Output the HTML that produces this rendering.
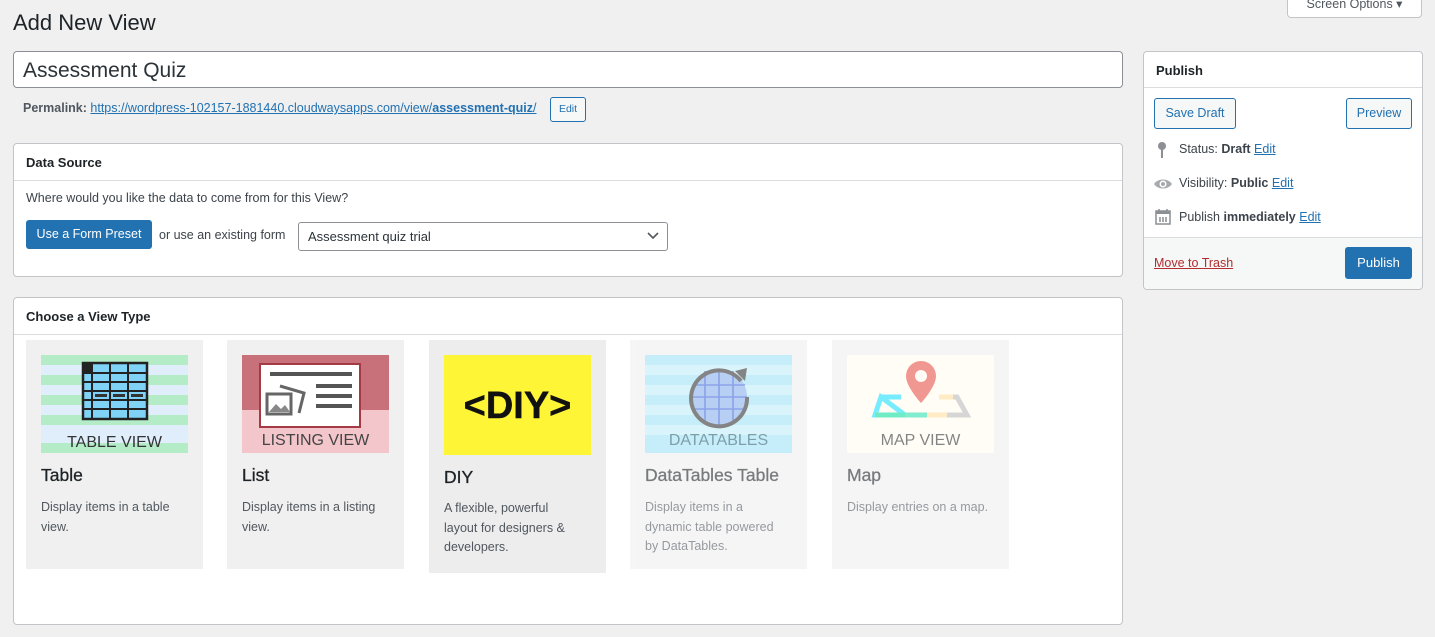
<!DOCTYPE html>
<html><head><meta charset="utf-8"><style>
*{box-sizing:border-box}
body{margin:0;width:1435px;height:637px;background:#f0f0f1;font-family:"Liberation Sans",sans-serif;color:#1d2327;font-size:13px;position:relative;overflow:hidden}
.abs{position:absolute}
h1{position:absolute;left:13px;top:10px;margin:0;font-size:22px;font-weight:400;color:#1d2327}
.so{left:1287px;top:-6px;width:135px;height:24px;background:#fff;border:1px solid #c3c4c7;border-top:none;border-radius:0 0 4px 4px;font-size:12.5px;color:#50575e;text-align:center;line-height:20px}
.title{left:13px;top:51px;width:1110px;height:37px;background:#fff;border:1px solid #8c8f94;border-radius:4px;font-size:21px;padding:7px 9px;color:#2c3338}
.perm{left:23px;top:101px;font-size:12.5px;color:#50575e}
.perm b{font-weight:700}
.perm a{color:#2271b1;text-decoration:underline}
.ebtn{left:550px;top:97px;width:36px;height:25px;border:1px solid #2271b1;border-radius:3px;background:#f6f7f7;color:#2271b1;font-size:10.5px;text-align:center;line-height:23px}
.box{background:#fff;border:1px solid #c3c4c7;border-radius:4px}
.hd{height:37px;border-bottom:1px solid #dcdcde;font-size:13px;font-weight:700;padding:11px 12px;color:#1d2327}
.blue{background:#2271b1;color:#fff;border-radius:3px;text-align:center}
.card{position:absolute;top:340px;width:177px;height:229px;background:#f0f0f0}
.card svg{position:absolute;left:15px;top:15px}
.card .t{position:absolute;left:15px;top:125px;font-size:17.5px;color:#1d2327;-webkit-text-stroke:0.3px #1d2327}
.card .d{position:absolute;left:15px;top:158px;width:160px;white-space:nowrap;font-size:12.5px;line-height:19.5px;color:#50575e}
.fade{opacity:.6}
.pbtn{border:1px solid #2271b1;border-radius:3px;background:#f6f7f7;color:#2271b1;font-size:12.5px;text-align:center;line-height:28px}
.row{left:1155px;font-size:12.5px;color:#3c434a}
.row a{color:#2271b1;text-decoration:underline}
</style></head><body>
<h1>Add New View</h1>
<div class="abs so">Screen Options ▾</div>
<div class="abs title">Assessment Quiz</div>
<div class="abs perm"><b>Permalink:</b> <a>https://wordpress-102157-1881440.cloudwaysapps.com/view/<b>assessment-quiz</b>/</a></div>
<div class="abs ebtn">Edit</div>

<div class="abs box" style="left:13px;top:143px;width:1110px;height:134px">
<div class="hd">Data Source</div>
<div class="abs" style="left:12px;top:47px;font-size:12.5px;color:#3c434a">Where would you like the data to come from for this View?</div>
<div class="abs blue" style="left:12px;top:76px;width:126px;height:29px;line-height:29px;font-size:12.5px">Use a Form Preset</div>
<div class="abs" style="left:145px;top:84px;font-size:12.5px;color:#3c434a">or use an existing form</div>
<div class="abs" style="left:284px;top:78px;width:370px;height:29px;border:1px solid #8c8f94;border-radius:3px;font-size:13px;padding:6px 9px;color:#2c3338">Assessment quiz trial
<svg class="abs" style="right:8px;top:9px" width="12" height="8" viewBox="0 0 12 8"><path d="M1 1l5 5 5-5" stroke="#50575e" stroke-width="1.6" fill="none"/></svg></div>
</div>

<div class="abs box" style="left:13px;top:297px;width:1110px;height:328px">
<div class="hd">Choose a View Type</div>
</div>

<div class="card" style="left:26px">
<svg width="147" height="98" viewBox="0 0 147 98">
<rect width="147" height="98" fill="#e0edfb"/>
<g fill="#b4ecc8"><rect y="0" width="147" height="10"/><rect y="20" width="147" height="10"/><rect y="40" width="147" height="10"/><rect y="60" width="147" height="10"/><rect y="88" width="147" height="10"/></g>
<rect x="42" y="8" width="64" height="56" fill="#7fd3f7" stroke="#222" stroke-width="2.5"/>
<rect x="42" y="8" width="9" height="9" fill="#222"/>
<g stroke="#222" stroke-width="2"><path d="M51 8v56M69 8v56M87 8v56M42 18h64M42 27h64M42 36h64M42 45h64M42 54h64"/></g>
<g fill="#333"><rect x="54" y="39" width="12" height="3"/><rect x="72" y="39" width="12" height="3"/><rect x="90" y="39" width="12" height="3"/></g>
<text x="73.5" y="92" font-size="16" fill="#333" text-anchor="middle" font-family="Liberation Sans">TABLE VIEW</text>
</svg>
<div class="t">Table</div><div class="d">Display items in a table<br>view.</div></div>

<div class="card" style="left:227px">
<svg width="147" height="98" viewBox="0 0 147 98">
<rect width="147" height="98" fill="#f2c6cb"/><rect width="147" height="55" fill="#c9717a"/>
<rect x="18" y="9" width="100" height="63" fill="#fff" stroke="#a33a44" stroke-width="2"/>
<g fill="#555"><rect x="28" y="17" width="82" height="4"/><rect x="74" y="29" width="36" height="4"/><rect x="74" y="39" width="36" height="4"/><rect x="74" y="49" width="36" height="4"/></g>
<rect x="25" y="39" width="24" height="20" fill="none" stroke="#666" stroke-width="3"/>
<path d="M38 31l24 7-5 20" stroke="#666" stroke-width="3" fill="none"/>
<path d="M27 57l7-8 5 5 4-4 5 7z" fill="#888"/>
<text x="73.5" y="90" font-size="16" fill="#444" text-anchor="middle" font-family="Liberation Sans">LISTING VIEW</text>
</svg>
<div class="t">List</div><div class="d">Display items in a listing<br>view.</div></div>

<div class="card" style="left:429px;height:233px;background:#ededed">
<svg width="147" height="100" viewBox="0 0 147 100">
<rect width="147" height="100" fill="#fdf536"/>
<text x="73.5" y="63" font-size="38" font-weight="700" fill="#111" text-anchor="middle" font-family="Liberation Sans" stroke="#111" stroke-width="0.4">&lt;DIY&gt;</text>
</svg>
<div class="t" style="top:127px">DIY</div><div class="d" style="top:159px">A flexible, powerful<br>layout for designers &amp;<br>developers.</div></div>

<div class="card fade" style="left:630px">
<svg width="147" height="98" viewBox="0 0 147 98">
<rect width="147" height="98" fill="#9fe4f7"/>
<g fill="#c2eefa"><rect y="10" width="147" height="10"/><rect y="30" width="147" height="10"/><rect y="50" width="147" height="10"/><rect y="70" width="147" height="10"/></g>
<circle cx="74" cy="42" r="28" fill="#8ab0ee"/>
<g stroke="#3f66d9" stroke-width="1.6"><path d="M60 16v52M74 14v56M88 16v52M48 30h52M46 42h56M48 54h52"/></g>
<path d="M96 26A28 28 0 1 0 102 42" stroke="#333" stroke-width="4" fill="none"/>
<path d="M90 16l10 10 2-13z" fill="#333"/>
<text x="73.5" y="90" font-size="16" fill="#2a5f70" text-anchor="middle" font-family="Liberation Sans">DATATABLES</text>
</svg>
<div class="t">DataTables Table</div><div class="d">Display items in a<br>dynamic table powered<br>by DataTables.</div></div>

<div class="card fade" style="left:832px">
<svg width="147" height="98" viewBox="0 0 147 98">
<rect width="147" height="98" fill="#fffdf0"/>
<path d="M34 42h20M28 60h30L34 42z" stroke="#20e0ff" stroke-width="5" fill="none"/>
<path d="M28 60h30" stroke="#10e0a0" stroke-width="5"/>
<path d="M58 60h22" stroke="#30e0b0" stroke-width="5"/>
<path d="M80 60h20M92 42h14" stroke="#ffe0a0" stroke-width="5"/>
<path d="M100 60h20l-10-18h-4" stroke="#bbb" stroke-width="5" fill="none"/>
<path d="M74 6a15 15 0 0 1 15 15c0 11-15 27-15 27s-15-16-15-27a15 15 0 0 1 15-15z" fill="#e8534a"/>
<circle cx="74" cy="21" r="6" fill="#fffdf0"/>
<text x="73.5" y="90" font-size="16" fill="#333" text-anchor="middle" font-family="Liberation Sans">MAP VIEW</text>
</svg>
<div class="t">Map</div><div class="d">Display entries on a map.</div></div>

<div class="abs box" style="left:1143px;top:51px;width:280px;height:239px;overflow:hidden">
<div class="hd" style="height:36px;padding:11px 12px">Publish</div>
<div class="abs" style="left:0;top:185px;width:280px;height:54px;background:#f6f7f7;border-top:1px solid #dcdcde"></div>
</div>
<div class="abs pbtn" style="left:1154px;top:98px;width:82px;height:31px;line-height:29px">Save Draft</div>
<div class="abs pbtn" style="left:1346px;top:98px;width:66px;height:31px;line-height:29px">Preview</div>
<svg class="abs" style="left:1157px;top:141px" width="10" height="18" viewBox="0 0 10 18"><circle cx="5" cy="5" r="4" fill="#8c8f94"/><rect x="4" y="8" width="2" height="9" fill="#8c8f94"/></svg>
<div class="abs row" style="left:1179px;top:142px">Status: <b>Draft</b> <a>Edit</a></div>
<svg class="abs" style="left:1153px;top:177px" width="20" height="14" viewBox="0 0 20 14"><path d="M1 7C5 1 15 1 19 7 15 13 5 13 1 7z" fill="#a7aaad"/><circle cx="10" cy="7" r="3.5" fill="#fff"/><circle cx="10" cy="7" r="2" fill="#a7aaad"/></svg>
<div class="abs row" style="left:1179px;top:176px">Visibility: <b>Public</b> <a>Edit</a></div>
<svg class="abs" style="left:1155px;top:208px" width="16" height="17" viewBox="0 0 16 17"><rect x="1" y="3" width="14" height="13" fill="none" stroke="#8c8f94" stroke-width="1.5"/><rect x="1" y="3" width="14" height="3" fill="#8c8f94"/><path d="M4 1v4M12 1v4M5 9v5M8 9v5M11 9v5" stroke="#8c8f94" stroke-width="1.5"/></svg>
<div class="abs row" style="left:1179px;top:210px">Publish <b>immediately</b> <a>Edit</a></div>
<div class="abs" style="left:1154px;top:256px;font-size:12.5px;color:#b32d2e;text-decoration:underline">Move to Trash</div>
<div class="abs blue" style="left:1345px;top:247px;width:67px;height:32px;line-height:32px;font-size:13px">Publish</div>
</body></html>
